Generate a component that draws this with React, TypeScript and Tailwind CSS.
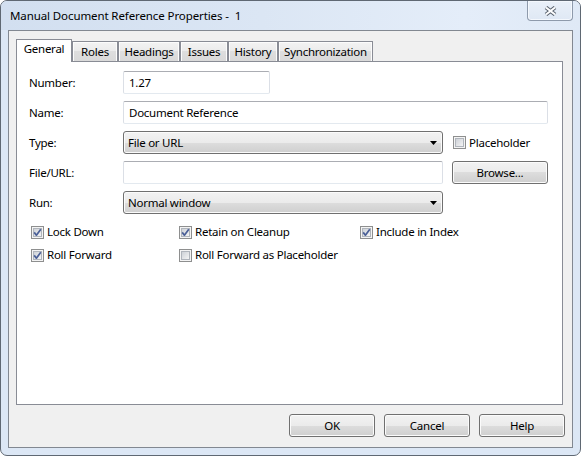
import React from "react";

const BTN_BG =
  "bg-[linear-gradient(#f2f2f2_0%,#ebebeb_50%,#dddddd_50%,#cfcfcf_100%)]";

function CheckBox({ checked }: { checked: boolean }) {
  return (
    <svg width="13" height="13" viewBox="0 0 13 13" className="shrink-0">
      <defs>
        <linearGradient id="cbInner" x1="0" y1="0" x2="1" y2="1">
          <stop offset="0" stopColor="#cbcfd5" />
          <stop offset="1" stopColor="#f7f7f7" />
        </linearGradient>
      </defs>
      <rect x="0.5" y="0.5" width="12" height="12" fill="#f4f4f4" stroke="#8e8f8f" />
      <rect x="2.5" y="2.5" width="8" height="8" fill="url(#cbInner)" stroke="#b0b5bc" />
      {checked && (
        <path
          d="M3.2 6.4 L5.4 9.2 L9.8 3.2"
          fill="none"
          stroke="#4a5f97"
          strokeWidth="1.7"
          strokeLinejoin="round"
        />
      )}
    </svg>
  );
}

function TextBox({ value, width }: { value?: string; width: string }) {
  return (
    <div
      className={`${width} flex h-[23px] items-center rounded-[2px] border border-x-[#dbdfe6] border-t-[#abadb3] border-b-[#e3e9ef] bg-white pl-[5px]`}
    >
      {value}
    </div>
  );
}

function DropDown({ value }: { value: string }) {
  return (
    <div
      className={`flex h-[23px] w-[320px] items-center rounded-[3px] border border-[#707070] ${BTN_BG} pl-[4px] pr-[5px] shadow-[inset_0_0_0_1px_#fbfbfb]`}
    >
      <span className="flex-1">{value}</span>
      <svg width="7" height="4" viewBox="0 0 7 4">
        <path d="M0 0 H7 L3.5 4 Z" fill="#000" />
      </svg>
    </div>
  );
}

function PushButton({ label, width }: { label: string; width: string }) {
  return (
    <div
      className={`${width} flex h-[23px] items-center justify-center rounded-[3px] border border-[#707070] ${BTN_BG} shadow-[inset_0_0_0_1px_#fbfbfb]`}
    >
      {label}
    </div>
  );
}

function Tab({ label, width, active }: { label: string; width: string; active?: boolean }) {
  if (active) {
    return (
      <div
        className={`${width} flex h-[23px] items-start justify-center border-x border-t border-[#898c95] bg-white pt-[3px]`}
      >
        {label}
      </div>
    );
  }
  return (
    <div
      className={`${width} mb-px flex h-[20px] items-center justify-center border-x border-t border-[#898c95] bg-[linear-gradient(#f3f3f3,#ebebeb_50%,#dedede_50%,#d9d9d9)] shadow-[inset_0_1px_0_#fcfcfc,inset_1px_0_0_#fcfcfc,inset_-1px_0_0_#fcfcfc]`}
    >
      {label}
    </div>
  );
}

function FieldRow({ label, children }: { label: string; children: React.ReactNode }) {
  return (
    <div className="flex h-[23px] items-center">
      <div className="w-[94px]">{label}</div>
      {children}
    </div>
  );
}

function Option({ label, checked }: { label: string; checked: boolean }) {
  return (
    <div className="flex h-[16px] items-center">
      <CheckBox checked={checked} />
      <span className="ml-[3px]">{label}</span>
    </div>
  );
}

export default function App() {
  return (
    <div className="h-[456px] w-[581px] bg-white font-['Noto_Sans',sans-serif] text-[11.5px] leading-none tracking-[-0.25px] text-black">
      <div className="relative flex h-full w-full flex-col rounded-[7px] border border-[#5f6873] bg-[#dce7f5]">
        {/* title bar */}
        <div className="flex h-[29px] items-center rounded-t-[6px] bg-[linear-gradient(90deg,#d2dff0,#dbe6f4_45%,#e4edf9_80%,#dfe9f6)] pl-[9px] text-[11.5px] tracking-[-0.1px]">
          <span className="whitespace-pre">Manual Document Reference Properties -  1</span>
        </div>
        <div className="absolute right-[7px] top-0 flex h-[20px] w-[46px] items-center justify-center rounded-b-[4px] border-x border-b border-[#8e9aab] bg-[linear-gradient(#e9f0f9,#dfe8f4)] shadow-[inset_0_0_0_1px_#f4f8fd]">
          <svg width="13" height="10" viewBox="0 0 13 10">
            <path d="M2 1.5 L11 8.5 M11 1.5 L2 8.5" stroke="#5b6470" strokeWidth="4" />
            <path d="M2 1.5 L11 8.5 M11 1.5 L2 8.5" stroke="#ffffff" strokeWidth="2" />
          </svg>
        </div>

        {/* client area */}
        <div className="mx-[7px] mb-[7px] flex flex-1 flex-col border border-[#828891] bg-[#f0f0f0] pb-[10px] pl-[7px] pr-[7px] pt-[8px]">
          <div className="relative z-10 -mb-px flex h-[23px] items-end">
            <Tab label="General" width="w-[56px]" active />
            <Tab label="Roles" width="w-[46px]" />
            <Tab label="Headings" width="w-[62px]" />
            <Tab label="Issues" width="w-[48px]" />
            <Tab label="History" width="w-[50px]" />
            <Tab label="Synchronization" width="w-[95px]" />
          </div>

          <div className="mr-[2px] flex flex-1 flex-col gap-[7px] border border-[#898c95] bg-white pl-[12px] pt-[9px]">
            <FieldRow label="Number:">
              <TextBox value="1.27" width="w-[147px]" />
            </FieldRow>
            <FieldRow label="Name:">
              <TextBox value="Document Reference" width="w-[425px]" />
            </FieldRow>
            <FieldRow label="Type:">
              <DropDown value="File or URL" />
              <div className="ml-[10px] flex items-center">
                <CheckBox checked={false} />
                <span className="ml-[3px]">Placeholder</span>
              </div>
            </FieldRow>
            <FieldRow label="File/URL:">
              <TextBox width="w-[320px]" />
              <div className="ml-[9px]">
                <PushButton label="Browse..." width="w-[96px]" />
              </div>
            </FieldRow>
            <FieldRow label="Run:">
              <DropDown value="Normal window" />
            </FieldRow>

            <div className="ml-[2px] mt-[3px] grid grid-cols-[148px_181px_1fr] gap-y-[7px]">
              <Option label="Lock Down" checked />
              <Option label="Retain on Cleanup" checked />
              <Option label="Include in Index" checked />
              <Option label="Roll Forward" checked />
              <Option label="Roll Forward as Placeholder" checked={false} />
            </div>
          </div>

          <div className="mt-[9px] flex justify-end gap-[9px]">
            <PushButton label="OK" width="w-[86px]" />
            <PushButton label="Cancel" width="w-[86px]" />
            <PushButton label="Help" width="w-[86px]" />
          </div>
        </div>
      </div>
    </div>
  );
}
